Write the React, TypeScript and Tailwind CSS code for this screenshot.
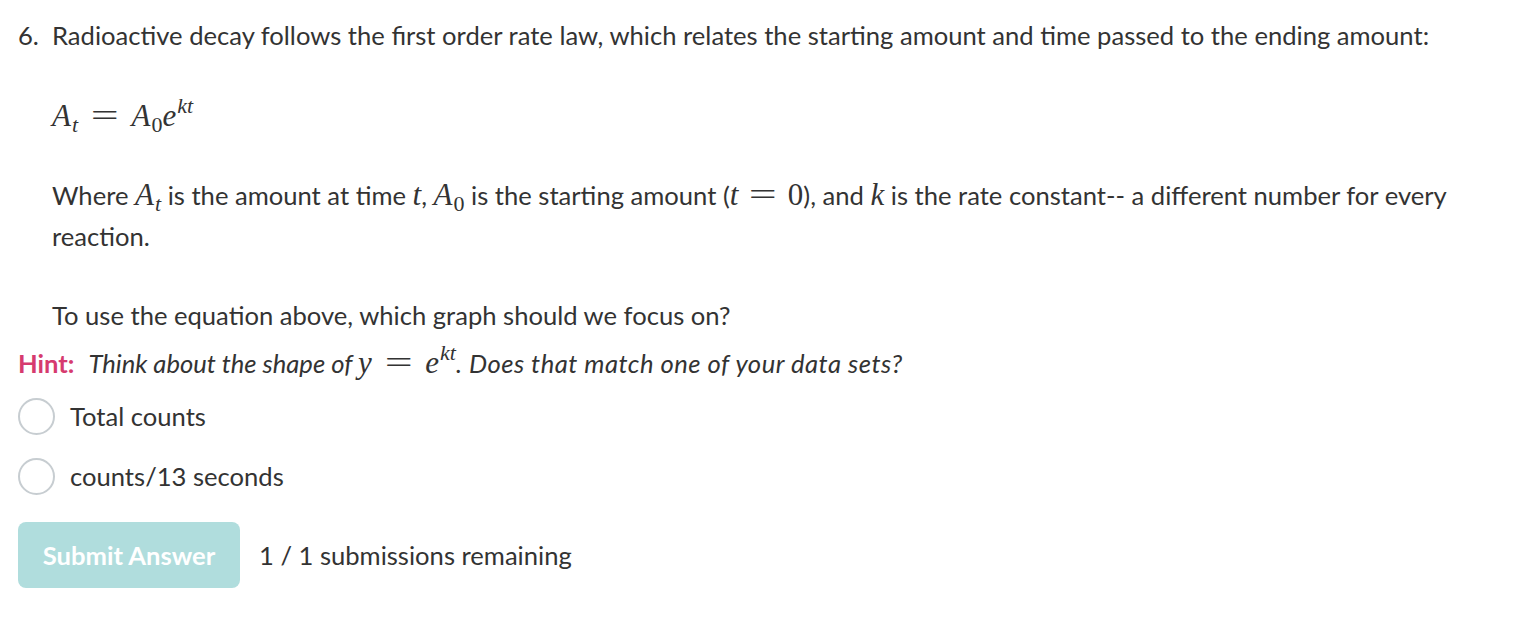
import React from "react";

const M = ({ children }: { children: React.ReactNode }) => (
  <span className="font-['Liberation_Serif',serif] text-[31px] leading-none not-italic">{children}</span>
);
const I = ({ children }: { children: React.ReactNode }) => <span className="italic">{children}</span>;
const Sub = ({ children, italic = true }: { children: React.ReactNode; italic?: boolean }) => (
  <span className={`text-[22px] align-[-6px] ml-[1px] ${italic ? "italic" : ""}`}>{children}</span>
);
const Sup = ({ children }: { children: React.ReactNode }) => (
  <span className="text-[22px] italic align-[13px] ml-[1px]">{children}</span>
);
const Eq = ({ cls }: { cls: string }) => (
  <span className={`inline-block not-italic scale-x-[1.6] ${cls}`}>=</span>
);

export default function App() {
  return (
    <div className="bg-white w-[1516px] h-[618px] font-['Lato',sans-serif] text-[25.6px] leading-[41px] text-[#333333]">
      <div className="pl-[18px] pt-[15px]">
        <div className="flex">
          <span className="w-[34px] shrink-0">6.</span>
          <div>
            <p>
              Radioactive decay follows the first order rate law, which relates the starting amount and time passed to the ending amount:
            </p>
            <p className="mt-[39px] h-[41px]">
              <M>
                <I>A</I>
                <Sub>t</Sub>
                <Eq cls="mx-[18px]" />
                <I>A</I>
                <Sub italic={false}>0</Sub>
                <I>e</I>
                <Sup>kt</Sup>
              </M>
            </p>
            <p className="mt-[39px] w-[1420px] h-[82px]">
              Where{" "}
              <M>
                <I>A</I>
                <Sub>t</Sub>
              </M>{" "}
              is the amount at time{" "}
              <M>
                <I>t</I>
              </M>
              ,{" "}
              <M>
                <I>A</I>
                <Sub italic={false}>0</Sub>
              </M>{" "}
              is the starting amount (
              <M>
                <I>t</I>
                <Eq cls="mx-[16px]" />0
              </M>
              ), and{" "}
              <M>
                <I>k</I>
              </M>{" "}
              is the rate constant-- a different number for every reaction.
            </p>
            <p className="mt-[38px] h-[41px]">To use the equation above, which graph should we focus on?</p>
          </div>
        </div>
        <p className="mt-[6px] h-[41px]">
          <span className="font-bold text-[#d63b6f]">Hint:</span>
          <span className="italic ml-[14px]">
            Think about the shape of{" "}
            <M>
              <I>y</I>
              <Eq cls="mx-[18px]" />
              <I>e</I>
              <Sup>kt</Sup>
            </M>
            <span className="tracking-[0.5px]">. Does that match one of your data sets?</span>
          </span>
        </p>
        <div className="mt-[3px]">
          {["Total counts", "counts/13 seconds"].map((t) => (
            <div key={t} className="h-[60px] flex items-center">
              <span className="w-[37px] h-[37px] rounded-full border-2 border-[#c7cdd1] bg-white shrink-0" />
              <span className="ml-[15px]">{t}</span>
            </div>
          ))}
        </div>
        <div className="mt-[16px] flex items-center">
          <button className="h-[66px] w-[222px] rounded-[8px] bg-[#b0dddd] text-white font-bold text-[25.6px]">
            Submit Answer
          </button>
          <span className="ml-[19px]">1 / 1 submissions remaining</span>
        </div>
      </div>
    </div>
  );
}
